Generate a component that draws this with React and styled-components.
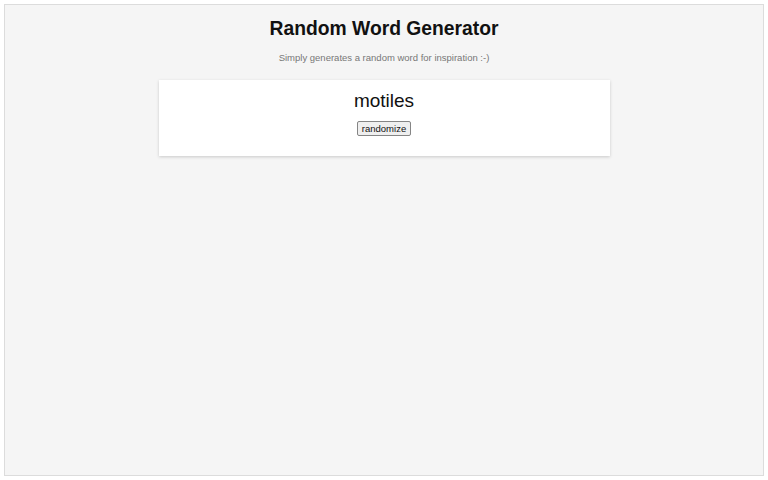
import React, { useState } from "react";
import styled, { createGlobalStyle } from "styled-components";

const Global = createGlobalStyle`
  html, body { margin: 0; padding: 0; background: #fff; }
  body { padding: 4px; font-family: "Liberation Sans", Arial, sans-serif; }
  * { box-sizing: border-box; }
`;

const Frame = styled.div`
  height: 472px;
  border: 1px solid #dcdcdc;
  background: #f5f5f5;
  display: flex;
  flex-direction: column;
  align-items: center;
  padding-top: 14px;
`;

const Title = styled.h1`
  margin: 0;
  font-size: 19.3px;
  font-weight: bold;
  color: #111;
  line-height: 20px;
`;

const Subtitle = styled.p`
  margin: 13px 0 0;
  font-size: 9.5px;
  color: #777;
  line-height: 12px;
`;

const Card = styled.div`
  margin-top: 16px;
  width: 451px;
  height: 76px;
  background: #fff;
  box-shadow: 0 1px 3px rgba(0, 0, 0, 0.18);
  display: flex;
  flex-direction: column;
  align-items: center;
  padding-top: 10px;
`;

const Word = styled.div`
  font-size: 19px;
  color: #111;
  line-height: 22px;
`;

const Button = styled.button`
  margin-top: 9px;
  font-family: "Liberation Sans", Arial, sans-serif;
  font-size: 9.5px;
  line-height: 11px;
  padding: 1px 4px;
  color: #111;
  background: #efefef;
  border: 1px solid #858585;
  border-radius: 2px;
`;

const words = ["motiles", "zephyr", "lantern", "quartz", "meadow"];

export default function App() {
  const [word, setWord] = useState("motiles");
  return (
    <>
      <Global />
      <Frame>
        <Title>Random Word Generator</Title>
        <Subtitle>Simply generates a random word for inspiration :-)</Subtitle>
        <Card>
          <Word>{word}</Word>
          <Button onClick={() => setWord(words[Math.floor(Math.random() * words.length)])}>
            randomize
          </Button>
        </Card>
      </Frame>
    </>
  );
}
